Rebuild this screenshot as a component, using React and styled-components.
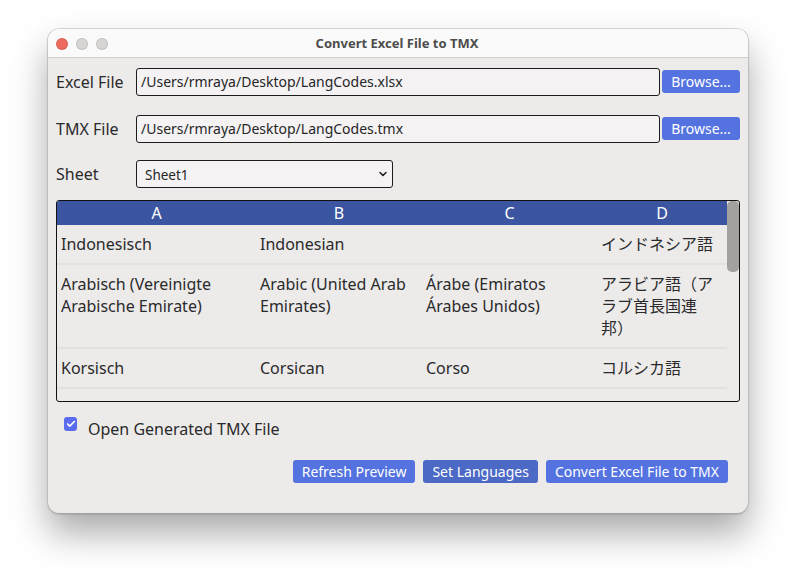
import React from "react";
import styled, { createGlobalStyle } from "styled-components";
import { ChevronDown, Check } from "lucide-react";

const Global = createGlobalStyle`
  html, body {
    margin: 0;
    height: 100%;
    background: #fff;
  }
  body {
    font-family: "Noto Sans", "Noto Sans CJK JP", sans-serif;
    color: #262626;
  }
  * {
    box-sizing: border-box;
  }
`;

const Page = styled.div`
  width: 796px;
  height: 580px;
  padding: 29px 48px 0;
  overflow: hidden;
`;

const Win = styled.div`
  width: 700px;
  height: 484px;
  background: #ecebea;
  border-radius: 11px;
  box-shadow: 0 0 0 0.5px #b4b4b4, 0 1px 2px rgba(0, 0, 0, 0.3), 0 20px 36px rgba(0, 0, 0, 0.34);
  overflow: hidden;
`;

const TitleBar = styled.div`
  position: relative;
  height: 29px;
  padding-right: 2px;
  background: #fbfafa;
  border-bottom: 1px solid #d0cfce;
  display: flex;
  align-items: center;
  justify-content: center;
  font-size: 13px;
  font-weight: 700;
  color: #4c4c4c;
`;

const Lights = styled.div`
  position: absolute;
  left: 8px;
  top: 9px;
  display: flex;
  gap: 8px;
`;

const Light = styled.span`
  width: 12px;
  height: 12px;
  border-radius: 50%;
  background: ${(p) => p.$color};
  border: 0.5px solid rgba(0, 0, 0, 0.1);
`;

const Content = styled.div`
  padding: 10px 8px 0;
`;

const FileRow = styled.div`
  display: flex;
  align-items: center;
  height: 28px;
  margin-bottom: ${(p) => p.$gap}px;
`;

const Label = styled.label`
  width: 80px;
  font-size: 16px;
  color: #2a2a2a;
`;

const TextInput = styled.input`
  width: 524px;
  height: 28px;
  padding: 0 4px 2px;
  border: 1px solid #1c1c1c;
  border-radius: 3px;
  background: #f4f2f3;
  color: #262626;
  font: 14px "Noto Sans", sans-serif;
  outline: none;
`;

const Button = styled.button`
  height: 23px;
  padding: 0 9px;
  border: none;
  border-radius: 3px;
  background: ${(p) => (p.$dark ? "#4c69c6" : "#5473e0")};
  color: #fff;
  font: 14px "Noto Sans", sans-serif;
  white-space: nowrap;
`;

const BrowseButton = styled(Button)`
  width: 78px;
  margin: 0 0 1px 2px;
  padding: 0;
`;

const SelectWrap = styled.div`
  position: relative;
  width: 257px;
  height: 28px;
  color: #1c1c1c;

  svg {
    position: absolute;
    right: 4px;
    top: 8px;
    pointer-events: none;
  }
`;

const Select = styled.select`
  width: 100%;
  height: 100%;
  padding: 1px 8px 0;
  appearance: none;
  border: 1px solid #1c1c1c;
  border-radius: 3px;
  background: #f4f2f3;
  color: #262626;
  font: 13.5px "Noto Sans", sans-serif;
  outline: none;
`;

const TableBox = styled.div`
  position: relative;
  height: 202px;
  border: 1px solid #111;
  border-radius: 3px;
  overflow: hidden;
`;

const Thumb = styled.div`
  position: absolute;
  top: 0;
  right: 0;
  width: 12px;
  height: 71px;
  border-radius: 5px;
  background: #a3a09f;
`;

const Table = styled.table`
  width: 670px;
  border-collapse: collapse;
  table-layout: fixed;
  font-size: 16px;
`;

const Head = styled.th`
  height: 24px;
  padding: 0;
  background: #3b55a0;
  color: #fff;
  font-size: 16px;
  font-weight: 400;
  width: ${(p) => p.$w}px;
`;

const Row = styled.tr`
  border-bottom: 2px solid #e2e1e0;
`;

const Cell = styled.td`
  padding: 8px 4px;
  line-height: 22px;
  vertical-align: top;
  color: #2a2a2a;
  text-spacing-trim: space-all;
`;

const CheckRow = styled.div`
  display: flex;
  align-items: center;
  height: 22px;
  margin: 16px 0 0 8px;
  font-size: 16px;
  color: #2a2a2a;
`;

const CheckBox = styled.span`
  display: flex;
  align-items: center;
  justify-content: center;
  width: 13px;
  height: 14px;
  margin: -10px 11px 0 0;
  border-radius: 3px;
  background: #5b6bf0;
  color: #fff;
`;

const Actions = styled.div`
  display: flex;
  justify-content: flex-end;
  gap: 8px;
  margin-top: 20px;
  padding-right: 12px;
`;

const columns = [
  ["A", 199],
  ["B", 166],
  ["C", 175],
  ["D", 130],
];

const rows = [
  ["Indonesisch", "Indonesian", "", "インドネシア語"],
  ["Arabisch (Vereinigte Arabische Emirate)", "Arabic (United Arab Emirates)", "Árabe (Emiratos Árabes Unidos)", "アラビア語（アラブ首長国連邦）"],
  ["Korsisch", "Corsican", "Corso", "コルシカ語"],
];

export default function App() {
  return (
    <Page>
      <Global />
      <Win>
        <TitleBar>
          <Lights>
            <Light $color="#ec6a5e" />
            <Light $color="#d8d6d5" />
            <Light $color="#d8d6d5" />
          </Lights>
          Convert Excel File to TMX
        </TitleBar>
        <Content>
          <FileRow $gap={19}>
            <Label>Excel File</Label>
            <TextInput readOnly value="/Users/rmraya/Desktop/LangCodes.xlsx" />
            <BrowseButton>Browse...</BrowseButton>
          </FileRow>
          <FileRow $gap={17}>
            <Label>TMX File</Label>
            <TextInput readOnly value="/Users/rmraya/Desktop/LangCodes.tmx" />
            <BrowseButton>Browse...</BrowseButton>
          </FileRow>
          <FileRow $gap={12}>
            <Label>Sheet</Label>
            <SelectWrap>
              <Select defaultValue="Sheet1">
                <option>Sheet1</option>
              </Select>
              <ChevronDown size={12} strokeWidth={3} />
            </SelectWrap>
          </FileRow>
          <TableBox>
            <Table>
              <thead>
                <tr>
                  {columns.map(([name, w]) => (
                    <Head key={name} $w={w}>{name}</Head>
                  ))}
                </tr>
              </thead>
              <tbody>
                {rows.map((row) => (
                  <Row key={row[0]}>
                    {row.map((text, i) => (
                      <Cell key={i}>{text}</Cell>
                    ))}
                  </Row>
                ))}
              </tbody>
            </Table>
            <Thumb />
          </TableBox>
          <CheckRow>
            <CheckBox>
              <Check size={10} strokeWidth={4} />
            </CheckBox>
            Open Generated TMX File
          </CheckRow>
          <Actions>
            <Button>Refresh Preview</Button>
            <Button $dark>Set Languages</Button>
            <Button>Convert Excel File to TMX</Button>
          </Actions>
        </Content>
      </Win>
    </Page>
  );
}
